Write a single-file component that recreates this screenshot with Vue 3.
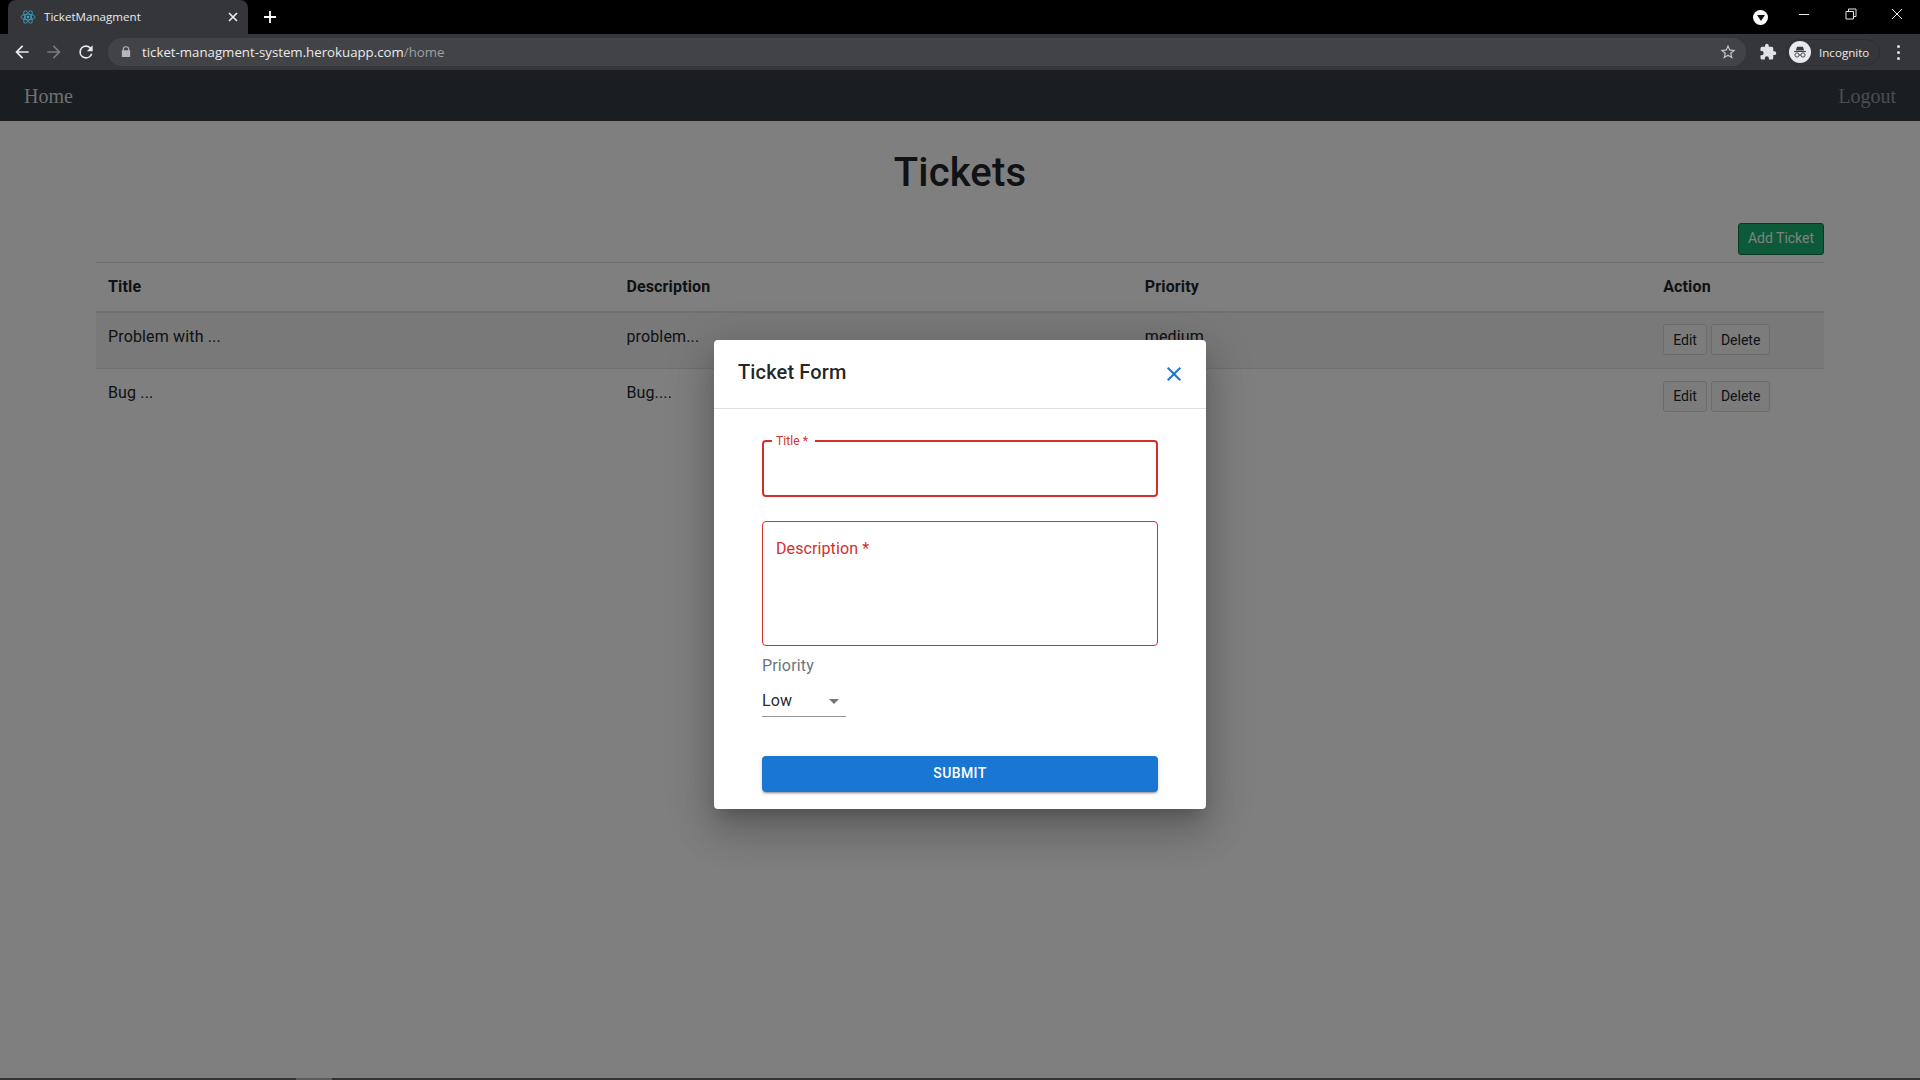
<script setup>
const rows = [
  { title: 'Problem with ...', description: 'problem...', priority: 'medium' },
  { title: 'Bug ...', description: 'Bug....', priority: 'low' }
]
</script>

<template>
  <div class="window">
    <div class="tabstrip">
      <div class="tab">
        <svg class="favicon" viewBox="0 0 24 24" width="16" height="16" fill="none" stroke="#3aa9c9" stroke-width="1.2">
          <ellipse cx="12" cy="12" rx="10.5" ry="4.2" />
          <ellipse cx="12" cy="12" rx="10.5" ry="4.2" transform="rotate(60 12 12)" />
          <ellipse cx="12" cy="12" rx="10.5" ry="4.2" transform="rotate(120 12 12)" />
          <circle cx="12" cy="12" r="2" fill="#3aa9c9" stroke="none" />
        </svg>
        <span class="tab-title">TicketManagment</span>
        <svg class="tab-close" viewBox="0 0 10 10" width="10" height="10" stroke="#e8eaed" stroke-width="1.7" fill="none">
          <path d="M1 1l8 8M9 1L1 9" />
        </svg>
      </div>
      <svg class="newtab" viewBox="0 0 12 12" width="12" height="12" stroke="#fff" stroke-width="1.8" fill="none">
        <path d="M6 0v12M0 6h12" />
      </svg>
      <div class="spacer"></div>
      <div class="media-dot"><span class="media-arrow"></span></div>
      <svg class="win-btn win-min" viewBox="0 0 12 12" width="12" height="12" stroke="#e8e8e8" stroke-width="1" fill="none"><path d="M1 6.5h10" /></svg>
      <svg class="win-btn win-max" viewBox="0 0 12 12" width="12" height="12" stroke="#e8e8e8" stroke-width="1" fill="none"><path d="M1 3.5h7.5V11H1zM3.5 3.5V1H11v7.5H8.5" /></svg>
      <svg class="win-btn win-close" viewBox="0 0 12 12" width="12" height="12" stroke="#e8e8e8" stroke-width="1" fill="none"><path d="M1 1l10 10M11 1L1 11" /></svg>
    </div>

    <div class="toolbar">
      <svg class="tool first" viewBox="0 0 24 24" width="20" height="20" fill="#e8eaed"><path d="M20 11H7.83l5.59-5.59L12 4l-8 8 8 8 1.41-1.41L7.83 13H20v-2z" /></svg>
      <svg class="tool" viewBox="0 0 24 24" width="20" height="20" fill="#77797c"><path d="M12 4l-1.41 1.41L16.17 11H4v2h12.17l-5.58 5.59L12 20l8-8z" /></svg>
      <svg class="tool" viewBox="0 0 24 24" width="20" height="20" fill="#e8eaed"><path d="M17.65 6.35A7.96 7.96 0 0 0 12 4a8 8 0 1 0 7.73 10h-2.08A6 6 0 1 1 12 6c1.66 0 3.14.69 4.22 1.78L13 11h7V4l-2.35 2.35z" /></svg>
      <div class="omnibox">
        <svg viewBox="0 0 12 14" width="10" height="12" fill="#b4b6b9"><path d="M10 5V4a4 4 0 0 0-8 0v1H1v8h10V5h-1zM3.4 4a2.6 2.6 0 0 1 5.2 0v1H3.400z" /></svg>
        <span class="url"><span class="host">ticket-managment-system.herokuapp.com</span><span class="path">/home</span></span>
        <div class="spacer"></div>
        <svg viewBox="0 0 24 24" width="18" height="18" fill="#c4c7c9"><path d="M22 9.24l-7.190-.62L12 2 9.190 8.630 2 9.240l5.460 4.730L5.820 21 12 17.270 18.180 21l-1.630-7.030L22 9.240zM12 15.400l-3.760 2.270 1-4.280-3.320-2.880 4.380-.38L12 6.100l1.710 4.040 4.380.38-3.320 2.880 1 4.280L12 15.400z" /></svg>
      </div>
      <svg class="puzzle" viewBox="0 0 24 24" width="18" height="18" fill="#dfe1e4"><path d="M20.500 11H19V7a2 2 0 0 0-2-2h-4V3.500a2.500 2.500 0 0 0-5 0V5H4a2 2 0 0 0-2 2v3.800h1.500a2.700 2.700 0 0 1 0 5.400H2V20a2 2 0 0 0 2 2h3.800v-1.500a2.700 2.700 0 0 1 5.400 0V22H17a2 2 0 0 0 2-2v-4h1.500a2.500 2.500 0 0 0 0-5z" /></svg>
      <div class="profile">
        <span class="avatar">
          <svg viewBox="0 0 24 24" width="18" height="18" fill="#3a3b3d">
            <path d="M8 5h8l1.500 5h-11zM4 10.500h16V12H4z" />
            <circle cx="8" cy="16" r="2.800" fill="none" stroke="#3a3b3d" stroke-width="1.200" />
            <circle cx="16" cy="16" r="2.800" fill="none" stroke="#3a3b3d" stroke-width="1.200" />
            <path d="M10.800 16h2.400" stroke="#3a3b3d" stroke-width="1.200" />
          </svg>
        </span>
        <span class="profile-name">Incognito</span>
      </div>
      <div class="kebab"><i></i><i></i><i></i></div>
    </div>

    <nav class="navbar">
      <a class="nav-link">Home</a>
      <a class="nav-link logout">Logout</a>
    </nav>

    <main class="page">
      <h1 class="heading">Tickets</h1>
      <div class="actions"><button class="btn-add">Add Ticket</button></div>
      <table class="table">
        <colgroup><col class="wide" /><col class="wide" /><col class="wide" /><col class="narrow" /></colgroup>
        <thead>
          <tr><th>Title</th><th>Description</th><th>Priority</th><th>Action</th></tr>
        </thead>
        <tbody>
          <tr v-for="row in rows" :key="row.title">
            <td>{{ row.title }}</td>
            <td>{{ row.description }}</td>
            <td>{{ row.priority }}</td>
            <td class="row-actions">
              <button class="btn-row">Edit</button>
              <button class="btn-row">Delete</button>
            </td>
          </tr>
        </tbody>
      </table>

      <div class="backdrop">
        <section class="modal">
          <header class="modal-head">
            <h2 class="modal-title">Ticket Form</h2>
            <svg viewBox="0 0 24 24" width="24" height="24" fill="#1976d2"><path d="M19 6.410 17.590 5 12 10.590 6.410 5 5 6.410 10.590 12 5 17.590 6.410 19 12 13.410 17.590 19 19 17.590 13.410 12z" /></svg>
          </header>
          <form class="modal-body" @submit.prevent>
            <div class="field field-title"><span class="notch">Title *</span></div>
            <div class="field field-desc"><span class="desc-label">Description *</span></div>
            <div class="priority-label">Priority</div>
            <div class="select">
              <span>Low</span>
              <span class="caret"></span>
            </div>
            <button class="submit">SUBMIT</button>
          </form>
        </section>
      </div>
    </main>

    <div class="taskbar"><span class="scroll-thumb"></span></div>
  </div>
</template>

<style scoped>
.window {
  width: 1920px;
  height: 1080px;
  display: flex;
  flex-direction: column;
  overflow: hidden;
  font-family: Roboto, "Liberation Sans", sans-serif;
  background: #808080;
}
.spacer { flex: 1; }

.tabstrip {
  height: 34px;
  background: #000;
  display: flex;
  align-items: center;
  padding-left: 8px;
}
.tab {
  width: 240px;
  height: 34px;
  background: #35363a;
  border-radius: 8px 8px 0 0;
  display: flex;
  align-items: center;
  padding: 0 10px 0 12px;
  box-sizing: border-box;
  gap: 8px;
}
.tab-title { color: #e8eaed; font-size: 11.6px; flex: 1; font-family: "Open Sans", Roboto, sans-serif; margin-bottom: 1px; }
.newtab { margin-left: 16px; }
.media-dot {
  width: 15px;
  height: 15px;
  border-radius: 50%;
  background: #fff;
  display: flex;
  align-items: center;
  justify-content: center;
  margin-right: 30px;
  margin-top: 1px;
}
.media-arrow {
  width: 0;
  height: 0;
  border-left: 4px solid transparent;
  border-right: 4px solid transparent;
  border-top: 6px solid #111;
}
.win-btn { margin-top: -7px; }
.win-min { margin-right: 35px; }
.win-max { margin-right: 34px; }
.win-close { margin-right: 17px; }

.toolbar {
  height: 36px;
  background: #35363a;
  display: flex;
  align-items: center;
}
.tool { margin-right: 12px; }
.tool.first { margin-left: 12px; }
.omnibox {
  width: 1638px;
  height: 28px;
  background: #424346;
  border-radius: 14px;
  display: flex;
  align-items: center;
  padding: 0 9px 0 13px;
  box-sizing: border-box;
}
.url { font-size: 13.25px; margin-left: 11px; font-family: "Open Sans", Roboto, sans-serif; }
.host { color: #e8eaed; }
.path { color: #9aa0a6; }
.puzzle { margin-left: 13px; }
.profile {
  width: 94px;
  height: 27px;
  margin-left: 9px;
  border: 1px solid #2c2d30;
  border-radius: 14px;
  display: flex;
  align-items: center;
  box-sizing: border-box;
  padding-left: 2px;
  gap: 8px;
  background: #35363a;
}
.avatar {
  width: 22px;
  height: 22px;
  background: #e8eaed;
  border-radius: 50%;
  display: flex;
  align-items: center;
  justify-content: center;
}
.profile-name { color: #e8eaed; font-size: 11.6px; font-family: "Open Sans", Roboto, sans-serif; }
.kebab {
  margin-left: 17px;
  display: flex;
  flex-direction: column;
  gap: 3px;
}
.kebab i { display: block; width: 3px; height: 3px; border-radius: 50%; background: #dfe1e4; }

.navbar {
  height: 51px;
  flex: none;
  background: #1a1e21;
  display: flex;
  align-items: center;
  justify-content: space-between;
  padding: 2px 24px 0;
  box-sizing: border-box;
  font-family: "Liberation Serif", serif;
  font-size: 20px;
}
.nav-link { color: #6f7173; }
.nav-link.logout { color: #4b4d4f; }

.page {
  flex: 1;
  position: relative;
  background: #fff;
  padding: 25px 96px 0;
  color: #212529;
}
.heading {
  margin: 0;
  text-align: center;
  font-size: 40px;
  line-height: 54px;
  font-weight: 500;
  letter-spacing: 0.15px;
}
.actions {
  display: flex;
  justify-content: flex-end;
  margin-top: 23px;
}
.btn-add {
  width: 86px;
  height: 32px;
  background: #1ab470;
  border: 1px solid #157347;
  border-radius: 3px;
  color: #fff;
  font: 400 14px Roboto, sans-serif;
  padding: 0 0 2px;
}
.table {
  width: 100%;
  margin-top: 7px;
  border-collapse: collapse;
  table-layout: fixed;
  font-size: 16px;
  letter-spacing: 0.15px;
}
.wide { width: 30%; }
.narrow { width: 10%; }
th, td {
  text-align: left;
  padding: 12px;
  border-bottom: 1px solid #dee2e6;
  line-height: 24px;
}
thead th {
  font-weight: 700;
  border-top: 1px solid #dee2e6;
  border-bottom: 2px solid #dee2e6;
}
tbody td { vertical-align: top; height: 56px; box-sizing: border-box; padding-top: 12px; padding-bottom: 10px; }
tbody tr:first-child td { background: #f2f2f2; }
tbody tr:last-child td { border-bottom: none; }
tbody td.row-actions { padding-top: 11px; padding-bottom: 0; white-space: nowrap; }
tbody tr:last-child td.row-actions { padding-top: 12px; }
.btn-row {
  height: 31px;
  padding: 0 9px;
  background: #f8f9fa;
  border: 1px solid #d3d6d9;
  border-radius: 3px;
  color: #212529;
  font: 400 14px Roboto, sans-serif;
  margin-right: 4px;
}

.backdrop {
  position: absolute;
  inset: 0;
  background: rgba(0, 0, 0, 0.5);
  display: flex;
  justify-content: center;
  align-items: flex-start;
  padding-top: 219px;
}
.modal {
  width: 492px;
  height: 469px;
  background: #fff;
  border-radius: 4px;
  box-shadow: 0 11px 15px -7px rgba(0,0,0,.2), 0 24px 38px 3px rgba(0,0,0,.14), 0 9px 46px 8px rgba(0,0,0,.12);
  display: flex;
  flex-direction: column;
}
.modal-head {
  height: 69px;
  flex: none;
  border-bottom: 1px solid #dee0e2;
  display: flex;
  align-items: center;
  justify-content: space-between;
  padding: 0 20px 0 24px;
  box-sizing: border-box;
}
.modal-title {
  margin: 0 0 4px;
  font-size: 20px;
  font-weight: 500;
  color: rgba(0,0,0,.87);
  letter-spacing: 0.15px;
}
.modal-head svg { margin-bottom: 1px; }
.modal-body {
  padding: 31px 48px 0;
  display: flex;
  flex-direction: column;
}
.field {
  position: relative;
  box-sizing: border-box;
  border-radius: 4px;
}
.field-title {
  height: 57px;
  border: 2px solid #d32f2f;
}
.notch {
  position: absolute;
  left: 8px;
  top: -9px;
  padding: 0 7px 0 4px;
  line-height: 16px;
  background: #fff;
  color: #d32f2f;
  font-size: 12px;
  letter-spacing: 0.1px;
}
.field-desc {
  height: 125px;
  margin-top: 24px;
  border: 1px solid #d32f2f;
  padding: 15px 13px;
}
.desc-label {
  color: #d32f2f;
  font-size: 16px;
  line-height: 24px;
  letter-spacing: 0.1px;
}
.priority-label {
  margin-top: 10px;
  font-size: 16px;
  line-height: 19px;
  color: #6c757d;
  letter-spacing: 0.15px;
}
.select {
  width: 84px;
  height: 35px;
  margin-top: 7px;
  box-sizing: border-box;
  border-bottom: 1px solid #949494;
  display: flex;
  align-items: center;
  justify-content: space-between;
  font-size: 16px;
  color: rgba(0,0,0,.87);
  letter-spacing: 0.15px;
  padding: 2px 7px 0 0;
}
.caret {
  width: 0;
  height: 0;
  border-left: 5px solid transparent;
  border-right: 5px solid transparent;
  border-top: 5px solid #757575;
  margin-top: 2px;
}
.submit {
  height: 36px;
  margin-top: 39px;
  background: #1976d2;
  border: none;
  border-radius: 4px;
  color: #fff;
  font: 500 14px Roboto, sans-serif;
  letter-spacing: 0.4px;
  box-shadow: 0 3px 1px -2px rgba(0,0,0,.2), 0 2px 2px rgba(0,0,0,.14), 0 1px 5px rgba(0,0,0,.12);
  padding: 0 0 2px;
}
.taskbar {
  height: 2px;
  flex: none;
  background: #333;
  position: relative;
}
.scroll-thumb {
  position: absolute;
  left: 296px;
  top: 0;
  width: 36px;
  height: 2px;
  background: #5c5c5c;
}
</style>
